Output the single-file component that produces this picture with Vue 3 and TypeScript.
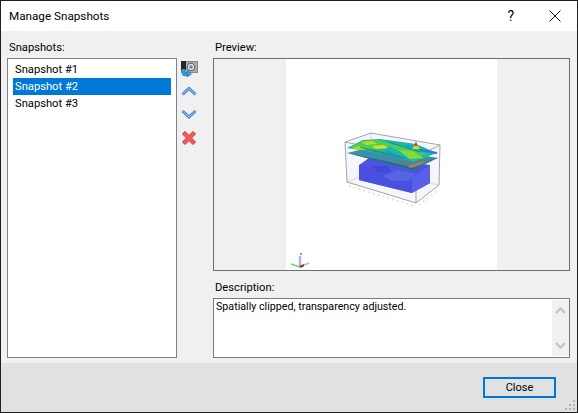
<template>
  <div class="window">
    <header class="titlebar">
      <span class="title">Manage Snapshots</span>
      <span class="help">?</span>
      <svg class="close-x" width="12" height="12" viewBox="0 0 12 12">
        <path d="M0.5 0.5 11.5 11.5M11.5 0.5 0.5 11.5" stroke="#1a1a1a" stroke-width="1" fill="none" />
      </svg>
    </header>

    <main class="body">
      <section class="left">
        <label class="label">Snapshots:</label>
        <ul class="list">
          <li
            v-for="(s, i) in snapshots"
            :key="s"
            class="item"
            :class="{ 'item--selected': i === selected }"
          >
            {{ s }}
          </li>
        </ul>
      </section>

      <nav class="tools">
        <svg width="17" height="16" viewBox="0 0 17 16">
          <rect x="0.500" y="0.500" width="16" height="11" fill="#a8a8a8" stroke="#8a8a8a" />
          <rect x="0" y="0" width="5" height="9" fill="#262626" />
          <circle cx="10" cy="6" r="3.800" fill="#dfe3e8" stroke="#59606a" />
          <circle cx="10" cy="6" r="1.800" fill="#5f87ad" />
          <path d="M2.500 8v3.500a2 2 0 0 0 2 2H7" fill="none" stroke="#1b6fb0" stroke-width="3.500" />
          <path d="M2.500 8v3.500a2 2 0 0 0 2 2H7" fill="none" stroke="#36a4e6" stroke-width="2.200" />
          <path d="M6.500 9.500 10.500 13 6.500 16Z" fill="#36a4e6" stroke="#1b6fb0" stroke-width=".6" />
        </svg>
        <svg width="16" height="11" viewBox="0 0 16 11">
          <path d="M1.500 7.500 8 1.500l6.500 6" fill="none" stroke="#3f85c9" stroke-width="3" />
          <path d="M1.500 7.500 8 1.500l6.500 6" fill="none" stroke="#a9cdee" stroke-width="1" />
        </svg>
        <svg width="16" height="12" viewBox="0 0 16 12">
          <path d="M1.500 3 8 9l6.500-6" fill="none" stroke="#3f85c9" stroke-width="3" />
          <path d="M1.500 3 8 9l6.500-6" fill="none" stroke="#a9cdee" stroke-width="1" />
        </svg>
        <svg width="16" height="16" viewBox="0 0 16 16">
          <path d="M1.500 4 4 1.500 8 5.500 12 1.500 14.500 4 10.500 8 14.500 12 12 14.500 8 10.500 4 14.500 1.500 12 5.500 8z" fill="#f05a5a" stroke="#cf3030" stroke-width="1" />
        </svg>
      </nav>

      <section class="right">
        <label class="label">Preview:</label>
        <div class="preview">
          <div class="canvas">
            <svg class="plot" width="211" height="211" viewBox="286 59 211 211">
              <defs>
                <filter id="soft" x="-5%" y="-5%" width="110%" height="110%">
                  <feGaussianBlur stdDeviation="0.5" />
                </filter>
              </defs>
              <g filter="url(#soft)">
                <!-- bounding box -->
                <path d="M345 142 371 133 440 145 439 185 416 203 347 182Z" fill="#f5f6fc" />
                <path d="M371 133V172M371 172 347 182M371 172 439 185" fill="none" stroke="#d5d7e4" stroke-width="1" />
                <path d="M345 142 371 133 440 145M345 142 416 157 440 145M416 157V203M345 142 347 182 416 203 439 185 440 145" fill="none" stroke="#a4a4a8" stroke-width="1" />
                <!-- clipped volume -->
                <path d="M359 165 372 156 430 165 430 183 412 193 359 180Z" fill="#4d53e2" />
                <path d="M359 165 412 178 412 193 359 180Z" fill="#4a50e0" />
                <path d="M412 178 430 165 430 183 412 193Z" fill="#5a5fe8" />
                <path d="M383 176 398 170 416 174 408 181 392 181Z" fill="#5666e2" />
                <path d="M372 166 388 166 392 172 376 172Z" fill="#4349d2" />
                <!-- slice plane -->
                <path d="M347 153 372 147 438 158 413 170Z" fill="#3a8fa6" />
                <path d="M347 153 413 167 438 157 413 170Z" fill="#276a80" />
                <path d="M392 161 412 158 432 161 412 168Z" fill="#52848c" />
                <path d="M408 166 424 161 422 164 410 168Z" fill="#b07a60" />
                <!-- surface -->
                <path d="M347 148 363 140 380 139 416 144 437 153 413 162 385 154Z" fill="#1fb9a0" />
                <path d="M350 147 364 141 378 140 392 144 385 149 362 150Z" fill="#55cc4a" />
                <path d="M361 142 372 141 378 144 366 145Z" fill="#b4de28" />
                <path d="M352 148 360 146 366 149 356 150Z" fill="#a8dc2c" />
                <path d="M386 144 405 146 428 155 416 156 396 150Z" fill="#46cf62" />
                <path d="M398 150 412 151 424 158 410 159Z" fill="#8ad83a" />
                <path d="M385 149 397 155 408 159 413 162 388 155Z" fill="#1d9fd0" />
                <path d="M372 146 384 145 388 148 376 149Z" fill="#d6e02c" />
                <path d="M404 145 418 146 420 149 408 149Z" fill="#12a8c8" />
                <path d="M360 147 378 152M388 142 420 152M372 150 405 158" fill="none" stroke="#11908e" stroke-width="1" />
                <path d="M420 150 437 153" fill="none" stroke="#2f78e6" stroke-width="2" />
                <!-- peak -->
                <path d="M412 149 416 143 420 149Z" fill="#dfd21e" />
                <path d="M414.500 146 416 141 417.500 146Z" fill="#e32a2a" />
                <!-- axis ticks -->
                <path d="M349 186 414 206M419 205 438 190" fill="none" stroke="#dcdcdc" stroke-width="1.500" stroke-dasharray="2 3" />
              </g>
              <!-- orientation axes -->
              <g filter="url(#soft)">
                <path d="M300 267V256" stroke="#b4b4e6" stroke-width="2.500" />
                <path d="M301 255V253" stroke="#8a8ae0" stroke-width="2" />
                <path d="M300 267 291 264" stroke="#6fd46f" stroke-width="1.500" />
                <path d="M300 267 304 265" stroke="#7a3030" stroke-width="2" />
                <path d="M304 265 309 263" stroke="#f0a0a0" stroke-width="1.500" />
              </g>
            </svg>
          </div>
        </div>
        <label class="label label--desc">Description:</label>
        <div class="description">
          <span class="desc-text">Spatially clipped, transparency adjusted.</span>
          <div class="scrollbar">
            <svg width="11" height="7" viewBox="0 0 11 7"><path d="M1 6 5.500 1.500 10 6" fill="none" stroke="#c0c0c0" stroke-width="2" /></svg>
            <svg width="11" height="7" viewBox="0 0 11 7"><path d="M1 1 5.500 5.500 10 1" fill="none" stroke="#c0c0c0" stroke-width="2" /></svg>
          </div>
        </div>
      </section>
    </main>

    <footer class="footer">
      <button class="close-btn" type="button">Close</button>
      <svg class="grip" width="12" height="12" viewBox="0 0 12 12" fill="#b4b4b4">
        <rect x="9" y="1" width="2" height="2" />
        <rect x="5" y="5" width="2" height="2" />
        <rect x="9" y="5" width="2" height="2" />
        <rect x="1" y="9" width="2" height="2" />
        <rect x="5" y="9" width="2" height="2" />
        <rect x="9" y="9" width="2" height="2" />
      </svg>
    </footer>
  </div>
</template>

<script setup lang="ts">
const snapshots: string[] = ['Snapshot #1', 'Snapshot #2', 'Snapshot #3']
const selected = 1
</script>

<style>
html,
body {
  margin: 0;
  overflow: hidden;
}
</style>

<style scoped>
.window {
  width: 578px;
  height: 413px;
  box-sizing: border-box;
  border: 1px solid #1f1f1f;
  display: flex;
  flex-direction: column;
  background: #f0f0f0;
  font-family: Roboto, "Liberation Sans", sans-serif;
  font-size: 11.2px;
  color: #000;
}

.titlebar {
  height: 30px;
  flex: none;
  background: #fff;
  display: flex;
  align-items: center;
  padding-left: 8px;
}

.title {
  flex: 1;
  font-size: 11.7px;
}

.help {
  font-size: 14px;
  margin-right: 35px;
}

.close-x {
  margin-right: 16px;
}

.body {
  flex: 1;
  display: flex;
  padding: 9px 7px 5px 6px;
  min-height: 0;
}

.left {
  width: 170px;
  display: flex;
  flex-direction: column;
}

.label {
  height: 18px;
  padding-left: 2px;
  line-height: 16px;
}

.list {
  flex: 1;
  margin: 0;
  padding: 2px 5px;
  list-style: none;
  background: #fff;
  border: 1px solid #82828c;
}

.item {
  height: 17px;
  line-height: 17px;
  padding-left: 2px;
}

.item--selected {
  background: #0078d7;
  color: #fff;
}

.tools {
  width: 36px;
  display: flex;
  flex-direction: column;
  align-items: flex-start;
  gap: 10px;
  padding: 21px 0 0 4px;
  box-sizing: border-box;
}

.right {
  flex: 1;
  display: flex;
  flex-direction: column;
}

.preview {
  height: 213px;
  flex: none;
  box-sizing: border-box;
  border: 1px solid #6e6e6e;
  display: flex;
  justify-content: center;
  background: #f0f0f0;
}

.canvas {
  width: 211px;
  background: #fff;
}

.plot {
  display: block;
}

.label--desc {
  margin-top: 9px;
}

.description {
  flex: 1;
  box-sizing: border-box;
  background: #fff;
  border: 1px solid #7a7a7a;
  display: flex;
  justify-content: space-between;
  padding: 1px 0 1px 2px;
}

.desc-text {
  font-size: 10.7px;
}

.scrollbar {
  width: 17px;
  background: #f0f0f0;
  display: flex;
  flex-direction: column;
  justify-content: space-between;
  align-items: center;
  padding: 7px 0;
  box-sizing: border-box;
}

.footer {
  height: 49px;
  flex: none;
  background: #e1e1e1;
  display: flex;
  justify-content: flex-end;
  align-items: flex-start;
  position: relative;
  padding: 14px 21px 0 0;
  box-sizing: border-box;
}

.close-btn {
  width: 73px;
  height: 21px;
  box-sizing: border-box;
  border: 2px solid #0078d7;
  background: #e1e1e1;
  font: inherit;
  font-size: 11px;
  color: #000;
  padding: 0;
}

.grip {
  position: absolute;
  right: 1px;
  bottom: 1px;
}
</style>
